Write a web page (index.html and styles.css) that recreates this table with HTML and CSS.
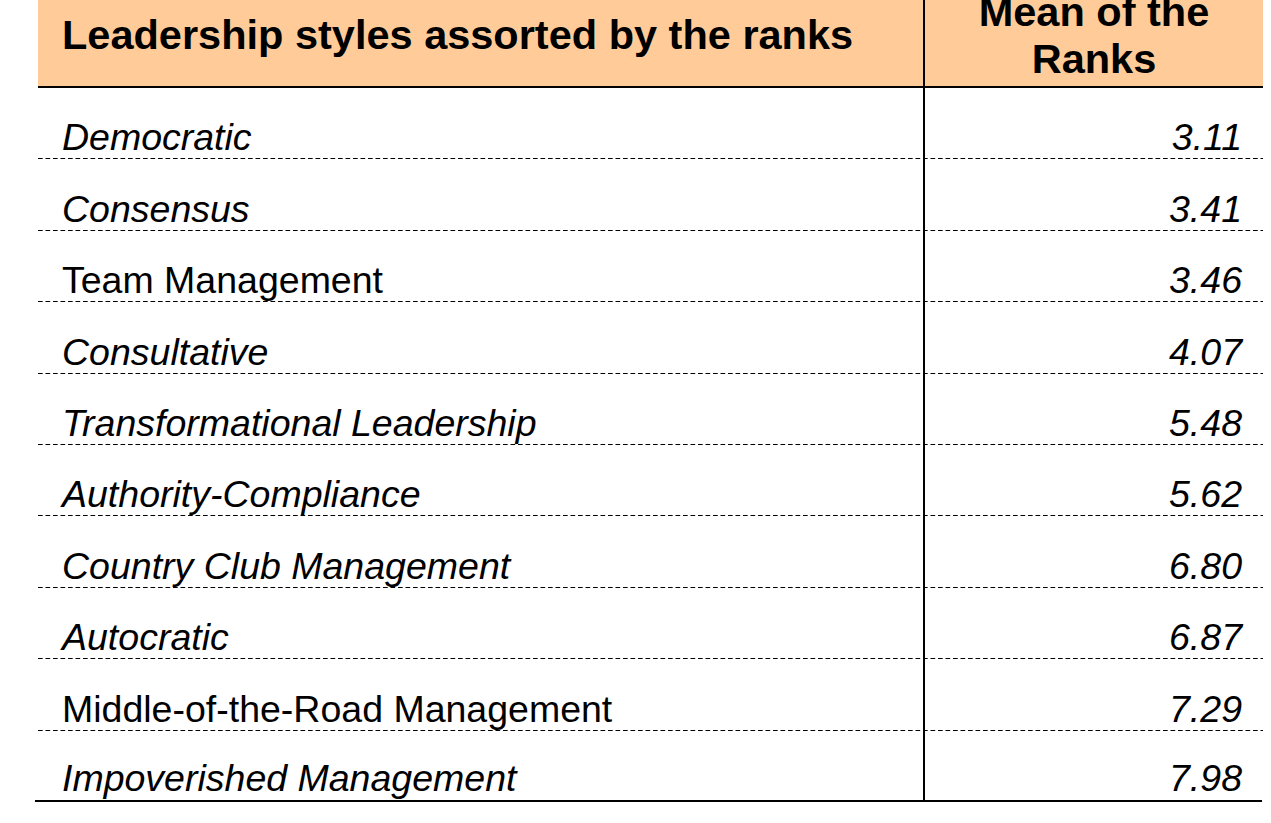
FILE: index.html
```html
<!DOCTYPE html>
<html lang="en">
<head>
<meta charset="utf-8">
<title>Leadership styles</title>
<link rel="stylesheet" href="styles.css">
</head>
<body>
<div class="table">
  <div class="head">
    <div class="hcell hleft">Leadership styles assorted by the ranks</div>
    <div class="hcell hright">Mean of the<br>Ranks</div>
  </div>
  <div class="row"><div class="cell name it">Democratic</div><div class="cell val">3.11</div></div>
  <div class="row"><div class="cell name it">Consensus</div><div class="cell val">3.41</div></div>
  <div class="row"><div class="cell name">Team Management</div><div class="cell val">3.46</div></div>
  <div class="row"><div class="cell name it">Consultative</div><div class="cell val">4.07</div></div>
  <div class="row"><div class="cell name it">Transformational Leadership</div><div class="cell val">5.48</div></div>
  <div class="row"><div class="cell name it">Authority-Compliance</div><div class="cell val">5.62</div></div>
  <div class="row"><div class="cell name it">Country Club Management</div><div class="cell val">6.80</div></div>
  <div class="row"><div class="cell name it">Autocratic</div><div class="cell val">6.87</div></div>
  <div class="row"><div class="cell name">Middle-of-the-Road Management</div><div class="cell val">7.29</div></div>
  <div class="row last"><div class="cell name it">Impoverished Management</div><div class="cell val">7.98</div></div>
</div>
</body>
</html>
```

FILE: styles.css
```css
html, body {
  margin: 0;
  padding: 0;
  background: #ffffff;
}
body {
  font-family: "Liberation Sans", Arial, sans-serif;
  color: #000;
  overflow: hidden;
}
.table {
  margin-left: 38px;
  width: 1225px;
}
.head {
  display: grid;
  grid-template-columns: 885px 340px;
  height: 88px;
  box-sizing: border-box;
  background: #ffcc99;
  border-bottom: 2px solid #000;
}
.hcell {
  font-weight: bold;
  font-size: 41.5px;
  line-height: 47px;
  display: flex;
  align-items: center;
  padding-bottom: 17px;
  box-sizing: border-box;
  height: 86px;
}
.hleft {
  padding-left: 24px;
}
.hright {
  border-left: 2px solid #000;
  justify-content: center;
  text-align: center;
}
.row {
  display: grid;
  grid-template-columns: 885px 340px;
  height: 71.4px;
  box-sizing: border-box;
  background-image: linear-gradient(to right, #000 0, #000 5px, transparent 5px);
  background-size: 7.5px 1px;
  background-repeat: repeat-x;
  background-position: left bottom;
}
.row.last {
  background: none;
  border-bottom: 2px solid #000;
  margin-left: -3px;
  padding-left: 3px;
  width: 1227px;
}
.cell {
  font-size: 37.5px;
  line-height: 42px;
  display: flex;
  align-items: flex-end;
  padding-bottom: 1px;
  box-sizing: border-box;
}
.name {
  padding-left: 24px;
}
.it {
  font-style: italic;
}
.val {
  font-style: italic;
  border-left: 2px solid #000;
  justify-content: flex-end;
  padding-right: 21px;
}
```
